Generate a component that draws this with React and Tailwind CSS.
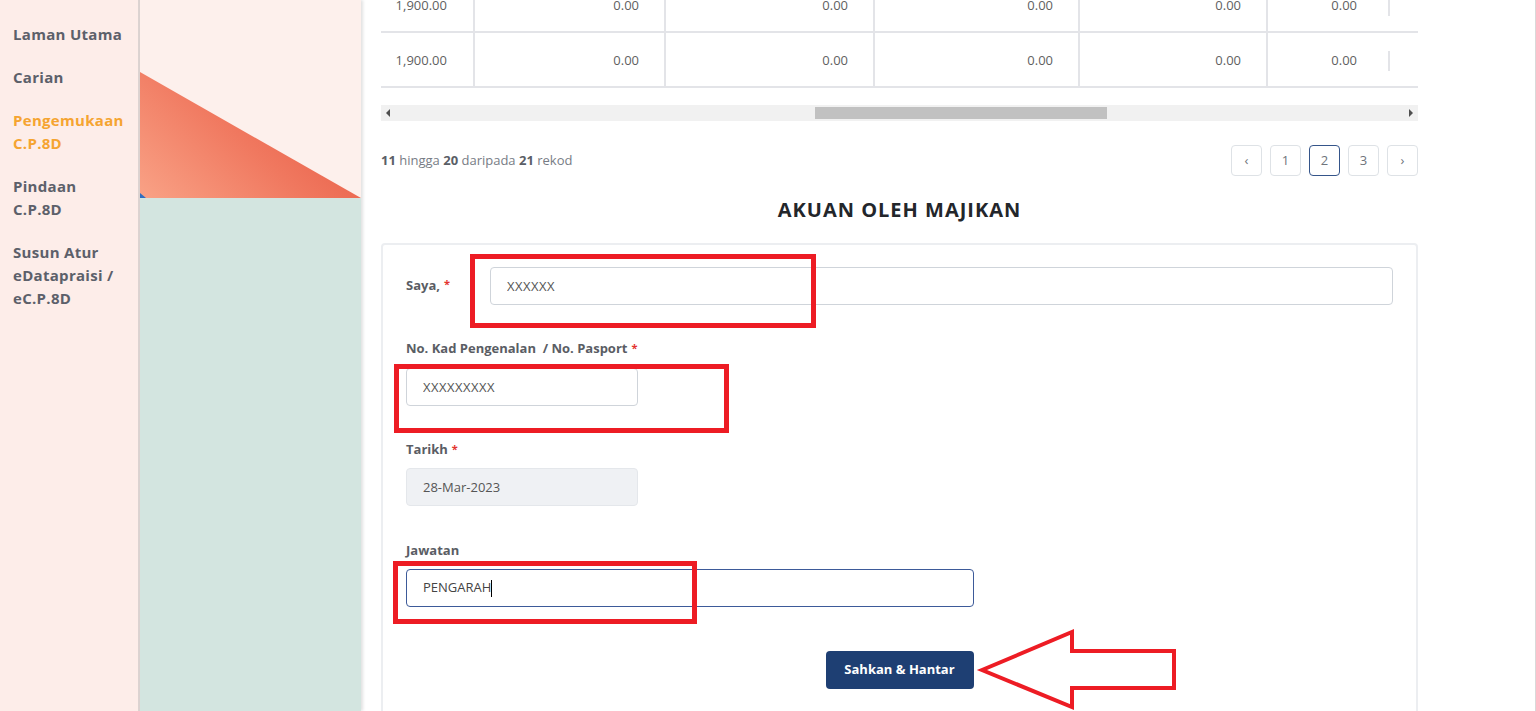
import React from "react";

const menu = [
  { lines: ["Laman Utama"] },
  { lines: ["Carian"] },
  { lines: ["Pengemukaan", "C.P.8D"], active: true },
  { lines: ["Pindaan", "C.P.8D"] },
  { lines: ["Susun Atur", "eDatapraisi /", "eC.P.8D"] },
];

const rows = [
  ["1,900.00", "0.00", "0.00", "0.00", "0.00", "0.00"],
  ["1,900.00", "0.00", "0.00", "0.00", "0.00", "0.00"],
];

function Row({ values, first }) {
  return (
    <div className={`flex h-[55px] border-b-2 border-[#e3e4e8] text-[13px] text-[#5f5f5f] ${first ? "mt-[-22px]" : ""}`}>
      <div className="w-[94px] flex items-center justify-end pt-[3px] pr-[26px] border-r-2 border-[#e3e4e8]">{values[0]}</div>
      <div className="w-[191px] flex items-center justify-end pt-[3px] pr-[25px] border-r-2 border-[#e3e4e8]">{values[1]}</div>
      <div className="w-[209px] flex items-center justify-end pt-[3px] pr-[25px] border-r-2 border-[#e3e4e8]">{values[2]}</div>
      <div className="w-[205px] flex items-center justify-end pt-[3px] pr-[25px] border-r-2 border-[#e3e4e8]">{values[3]}</div>
      <div className="w-[188px] flex items-center justify-end pt-[3px] pr-[25px] border-r-2 border-[#e3e4e8]">{values[4]}</div>
      <div className="w-[120px] flex items-center justify-end pt-[3px] pr-[31px]">{values[5]}</div>
      <div className="flex-1 flex items-center pt-[3px]">
        <span className="block w-[2px] h-[20px] bg-[#e3e4e8]" />
      </div>
    </div>
  );
}

function Req() {
  return <span className="text-[#e3342f] text-[11px] ml-1 align-top">*</span>;
}

export default function App() {
  return (
    <div
      className="flex h-screen overflow-hidden bg-white"
      style={{ fontFamily: '"Open Sans", "Liberation Sans", sans-serif' }}
    >
      {/* SIDEBAR */}
      <aside className="w-[140px] shrink-0 bg-[#fdede9] border-r-2 border-[#dcd3d1] pt-[23px] pl-[13px]">
        <ul className="flex flex-col gap-[20px]">
          {menu.map((m) => (
            <li
              key={m.lines.join(" ")}
              className={`text-[15px] font-bold leading-[23px] tracking-[0.3px] ${m.active ? "text-[#f5a431]" : "text-[#5c606a]"}`}
            >
              {m.lines.map((l) => (
                <span key={l} className="block">{l}</span>
              ))}
            </li>
          ))}
        </ul>
      </aside>

      {/* DECOR PANEL */}
      <div className="w-[221px] shrink-0 flex flex-col shadow-[2px_0_3px_rgba(0,0,0,0.12)] z-10">
        <div className="h-[198px] bg-[#fdf0ec]">
          <svg width="221" height="198" viewBox="0 0 221 198" className="block">
            <defs>
              <linearGradient id="tri" x1="0" y1="1" x2="1" y2="0.4">
                <stop offset="0" stopColor="#f9a286" />
                <stop offset="0.55" stopColor="#f0785f" />
                <stop offset="1" stopColor="#e75a44" />
              </linearGradient>
            </defs>
            <polygon points="0,72 0,198 221,198" fill="url(#tri)" />
            <polygon points="0,193 6,198 0,198" fill="#2f6fc0" />
          </svg>
        </div>
        <div className="flex-1 bg-[#d3e5e0]" />
      </div>

      {/* MAIN */}
      <main className="flex-1 bg-white pl-5 pr-[117px] border-r border-[#d9d9d9]">
        {/* TABLE */}
        <div>
          {rows.map((r, i) => (
            <Row key={i} values={r} first={i === 0} />
          ))}
        </div>

        {/* SCROLLBAR */}
        <div className="mt-[17px] h-[16px] bg-[#f1f1f1] flex items-center relative">
          <span className="ml-[5px] w-0 h-0 border-y-[4px] border-y-transparent border-r-[4px] border-r-[#505050]" />
          <span className="absolute left-[434px] top-[2px] h-[12px] w-[292px] bg-[#c1c1c1]" />
          <span className="ml-auto mr-[5px] w-0 h-0 border-y-[4px] border-y-transparent border-l-[4px] border-l-[#505050]" />
        </div>

        {/* PAGINATION */}
        <div className="mt-[24px] flex items-center justify-between">
          <p className="text-[13px] text-[#777c85]">
            <b className="text-[#5a5e66]">11</b> hingga <b className="text-[#5a5e66]">20</b> daripada{" "}
            <b className="text-[#5a5e66]">21</b> rekod
          </p>
          <div className="flex gap-[8px] text-[13px] text-[#6f747c]">
            <span className="w-[31px] h-[31px] flex items-center justify-center border border-[#dee2e6] rounded">‹</span>
            <span className="w-[31px] h-[31px] flex items-center justify-center border border-[#dee2e6] rounded">1</span>
            <span className="w-[31px] h-[31px] flex items-center justify-center border border-[#35558a] rounded">2</span>
            <span className="w-[31px] h-[31px] flex items-center justify-center border border-[#dee2e6] rounded">3</span>
            <span className="w-[31px] h-[31px] flex items-center justify-center border border-[#dee2e6] rounded">›</span>
          </div>
        </div>

        {/* HEADING */}
        <h2 className="mt-[20px] text-center text-[20px] leading-[28px] font-bold tracking-[1px] text-[#23262b]">
          AKUAN OLEH MAJIKAN
        </h2>

        {/* CARD */}
        <div className="relative mt-[19px] border-2 border-[#eceef1] rounded-[4px] px-[23px] pt-[22px] pb-[60px]">
          <div className="flex items-center">
            <label className="w-[84px] text-[13px] font-bold text-[#5a5d64]">
              Saya,<Req />
            </label>
            <input
              readOnly
              value="XXXXXX"
              className="flex-1 h-[38px] border border-[#cfd4da] rounded-[4px] px-[16px] text-[13px] tracking-[0.5px] text-[#555] outline-none"
            />
          </div>

          <div className="mt-[33px]">
            <label className="block text-[13px] leading-[20px] font-bold text-[#5a5d64]">
              No. Kad Pengenalan&nbsp; / No. Pasport<Req />
            </label>
            <input
              readOnly
              value="XXXXXXXXX"
              className="mt-[10px] w-[232px] h-[38px] border border-[#cfd4da] rounded-[4px] px-[16px] text-[13px] tracking-[0.5px] text-[#555] outline-none"
            />
          </div>

          <div className="mt-[33px]">
            <label className="block text-[13px] leading-[20px] font-bold text-[#5a5d64]">
              Tarikh<Req />
            </label>
            <input
              readOnly
              value="28-Mar-2023"
              className="mt-[9px] w-[232px] h-[38px] border border-[#e4e7eb] bg-[#eff1f4] rounded-[4px] px-[16px] text-[13px] text-[#555] outline-none"
            />
          </div>

          <div className="mt-[34px]">
            <label className="block text-[13px] leading-[20px] font-bold text-[#5a5d64]">Jawatan</label>
            <div className="mt-[9px] w-[568px] h-[38px] border border-[#3d5a99] rounded-[4px] px-[16px] flex items-center text-[13px] text-[#444]">
              PENGARAH
              <span className="inline-block w-px h-[17px] bg-black" />
            </div>
          </div>

          <div className="mt-[44px] flex justify-center">
            <button className="w-[148px] h-[38px] bg-[#1e3f73] text-white text-[13px] font-bold rounded-[4px]">
              Sahkan &amp; Hantar
            </button>
          </div>

          {/* annotations */}
          <span className="absolute left-[87px] top-[9px] w-[346px] h-[74px] border-[5px] border-[#ed1c24] pointer-events-none" />
          <span className="absolute left-[11px] top-[119px] w-[335px] h-[69px] border-[5px] border-[#ed1c24] pointer-events-none" />
          <span className="absolute left-[10px] top-[316px] w-[304px] h-[63px] border-[5px] border-[#ed1c24] pointer-events-none" />
          <svg
            className="absolute left-[587px] top-[375px] pointer-events-none"
            width="214"
            height="95"
            viewBox="0 0 214 95"
          >
            <polygon
              points="12,50 102,12 102,31 204,31 204,68 102,68 102,87"
              fill="none"
              stroke="#ed1c24"
              strokeWidth="4"
            />
          </svg>
        </div>
      </main>
    </div>
  );
}
